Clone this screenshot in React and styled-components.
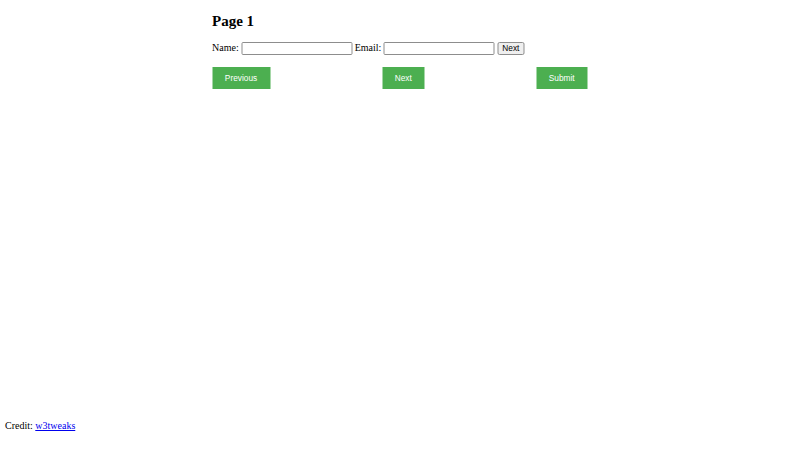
import React from "react";
import styled, { createGlobalStyle } from "styled-components";

const Global = createGlobalStyle`
  html, body { margin: 0; padding: 0; background: #fff; }
  body { font-family: "Liberation Serif", "Times New Roman", serif; font-size: 10px; color: #000; }
`;

const Page = styled.div`
  min-height: 100vh;
  display: flex;
  flex-direction: column;
`;

const Wizard = styled.div`
  width: 375px;
  margin: 0 auto;
  padding-top: 12.5px;
  transform: translateX(-0.5px);
`;

const Title = styled.h2`
  margin: 0 0 12px;
  font-size: 15px;
  font-weight: bold;
  line-height: 17px;
`;

const FieldRow = styled.form`
  display: flex;
  align-items: center;
  height: 13px;
  margin: 0;
`;

const Label = styled.label`
  font-size: 10px;
  line-height: 12px;
  margin-right: 2.5px;
`;

const TextInput = styled.input`
  box-sizing: border-box;
  width: 111px;
  height: 13px;
  padding: 0 1px;
  border: 1px solid #8d8d8d;
  border-radius: 1.5px;
  background: #fff;
  margin: 0 ${(p) => p.$gap || 2}px 0 0;
  font-size: 8px;
`;

const SmallButton = styled.button`
  box-sizing: border-box;
  height: 13px;
  width: 27px;
  padding: 0;
  border: 1px solid #8d8d8d;
  border-radius: 2px;
  background: #efefef;
  color: #000;
  font-family: "Liberation Sans", Arial, sans-serif;
  font-size: 8.3px;
  line-height: 11px;
`;

const Nav = styled.div`
  display: flex;
  justify-content: space-between;
  margin-top: 12.5px;
`;

const NavButton = styled.button`
  box-sizing: border-box;
  height: 21.5px;
  width: ${(p) => p.$w}px;
  padding: 0;
  border: none;
  background: #4caf50;
  color: #fff;
  font-family: "Liberation Sans", Arial, sans-serif;
  font-size: 8.3px;
`;

const Credit = styled.div`
  margin-top: auto;
  padding: 0 0 18px 5px;
  font-size: 10px;
  line-height: 12px;

  a { color: #0000ee; }
`;

export default function App() {
  return (
    <Page>
      <Global />
      <Wizard>
        <Title>Page 1</Title>
        <FieldRow onSubmit={(e) => e.preventDefault()}>
          <Label>Name:</Label>
          <TextInput type="text" $gap={2.5} />
          <Label>Email:</Label>
          <TextInput type="email" $gap={2.5} />
          <SmallButton type="button">Next</SmallButton>
        </FieldRow>
        <Nav>
          <NavButton $w={58}>Previous</NavButton>
          <NavButton $w={42.5}>Next</NavButton>
          <NavButton $w={50.5}>Submit</NavButton>
        </Nav>
      </Wizard>
      <Credit>
        Credit: <a href="#">w3tweaks</a>
      </Credit>
    </Page>
  );
}
